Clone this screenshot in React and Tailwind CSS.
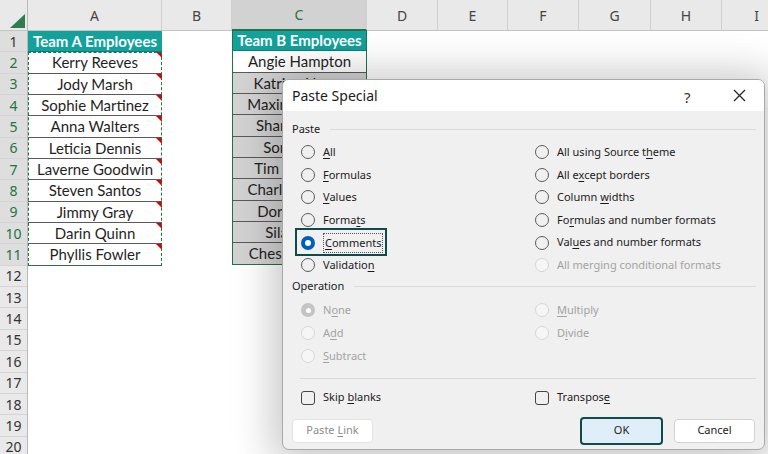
import React from 'react';

const teamA = [
  'Kerry Reeves', 'Jody Marsh', 'Sophie Martinez', 'Anna Walters', 'Leticia Dennis',
  'Laverne Goodwin', 'Steven Santos', 'Jimmy Gray', 'Darin Quinn', 'Phyllis Fowler',
];
const teamB = [
  'Angie Hampton', 'Katrina Hayes', 'Maxine Sanders', 'Shane Tucker', 'Sonya Diaz',
  'Tim Holloway', 'Charles Morgan', 'Doris Palmer', 'Silas Ward', 'Chester Howell',
];

const rows = Array.from({ length: 20 }, (_, i) => i + 1);

// access key underline
function Key({ text, k = -1 }) {
  if (k < 0) return <span>{text}</span>;
  return (
    <span>
      {text.slice(0, k)}
      <span className="underline underline-offset-2">{text[k]}</span>
      {text.slice(k + 1)}
    </span>
  );
}

function Radio({ checked, disabled }) {
  if (checked && disabled) {
    return (
      <span className="w-[14px] h-[14px] rounded-full bg-[#c4c4c4] flex items-center justify-center shrink-0">
        <span className="w-[5px] h-[5px] rounded-full bg-white" />
      </span>
    );
  }
  if (checked) {
    return (
      <span className="w-[14px] h-[14px] rounded-full bg-[#005fb8] flex items-center justify-center shrink-0">
        <span className="w-[6px] h-[6px] rounded-full bg-white" />
      </span>
    );
  }
  return (
    <span
      className={
        disabled
          ? 'w-[14px] h-[14px] rounded-full border border-[#d6d6d6] bg-[#f6f6f6] shrink-0'
          : 'w-[14px] h-[14px] rounded-full border border-[#5c5c5c] shrink-0'
      }
    />
  );
}

function Option({ text, k, checked, disabled, focused, tall }) {
  return (
    <div className={(tall ? 'h-[23px]' : 'h-[22.6px]') + ' flex items-center gap-[8px] relative'}>
      <Radio checked={checked} disabled={disabled} />
      {focused ? (
        <span className="border border-dotted border-[#555] px-[1px] leading-[18px] text-[#1b1b1b]">
          <Key text={text} k={k} />
        </span>
      ) : (
        <span className={disabled ? 'text-[#a3a3a3]' : 'text-[#1b1b1b]'}>
          <Key text={text} k={k} />
        </span>
      )}
      {focused && (
        <span className="absolute left-[-6px] top-[-3px] w-[92px] h-[28px] border-2 border-[#0e4b4b] pointer-events-none" />
      )}
    </div>
  );
}

function GroupHeader({ label, className }) {
  return (
    <div className={'h-[18px] flex items-center ' + className}>
      <span className="text-[#1b1b1b]">{label}</span>
      <span className="flex-1 h-px bg-[#dadada] ml-[10px]" />
    </div>
  );
}

function Checkbox({ text, k }) {
  return (
    <div className="h-[22px] flex items-center gap-[8px]">
      <span className="w-[14px] h-[14px] rounded-[3px] border border-[#444] shrink-0" />
      <span className="text-[#1b1b1b]">
        <Key text={text} k={k} />
      </span>
    </div>
  );
}

function CommentMark() {
  return (
    <span className="absolute top-0 right-0 w-0 h-0 border-t-[6px] border-l-[6px] border-t-[#e00000] border-l-transparent" />
  );
}

function ColHead({ label, w, active }) {
  return (
    <div
      className={
        w +
        ' h-[31px] flex items-center justify-center border-r border-[#cfcfcf] ' +
        (active
          ? 'bg-[#d2d2d2] text-[#217346] border-b-2 border-b-[#217346]'
          : 'bg-[#e9e9e9] text-[#444] border-b border-b-[#c4c4c4]')
      }
    >
      {label}
    </div>
  );
}

function PasteDialog() {
  return (
    <div className="absolute left-[282px] top-[79px] w-[483px] h-[371px] rounded-[7px] border border-[#a9a9a9] bg-[#f0f0f0] overflow-hidden shadow-[0_4px_40px_10px_rgba(0,0,0,0.22)] font-['Noto_Sans',sans-serif] text-[11px]">
      <div className="h-[31px] bg-white flex items-center pl-[9px] relative">
        <span className="text-[14px] text-[#1b1b1b]">Paste Special</span>
        <span className="absolute left-[401px] top-[6px] text-[15px] text-[#333]">?</span>
        <svg className="absolute left-[450px] top-[9px]" width="13" height="13" viewBox="0 0 13 13">
          <path d="M1 1 L12 12 M12 1 L1 12" stroke="#222" strokeWidth="1.2" />
        </svg>
      </div>
      <div className="pl-[9px] pr-[8px]">
        <GroupHeader label="Paste" className="mt-[9px]" />
        <div className="pl-[9px] mt-[3px] grid grid-cols-[234px_1fr]">
          <div>
            <Option text="All" k={0} />
            <Option text="Formulas" k={0} />
            <Option text="Values" k={0} />
            <Option text="Formats" k={5} />
            <Option text="Comments" k={0} checked focused />
            <Option text="Validation" k={9} />
          </div>
          <div>
            <Option text="All using Source theme" k={18} />
            <Option text="All except borders" k={5} />
            <Option text="Column widths" k={7} />
            <Option text="Formulas and number formats" k={2} />
            <Option text="Values and number formats" k={3} />
            <Option text="All merging conditional formats" disabled />
          </div>
        </div>
        <GroupHeader label="Operation" className="mt-[1px]" />
        <div className="pl-[9px] mt-[3px] grid grid-cols-[234px_1fr]">
          <div>
            <Option text="None" k={1} checked disabled tall />
            <Option text="Add" k={1} disabled tall />
            <Option text="Subtract" k={0} disabled tall />
          </div>
          <div>
            <Option text="Multiply" k={0} disabled tall />
            <Option text="Divide" k={1} disabled tall />
          </div>
        </div>
        <div className="h-px bg-[#dadada] ml-[8px] mt-[10px]" />
        <div className="pl-[9px] mt-[8px] grid grid-cols-[234px_1fr]">
          <Checkbox text="Skip blanks" k={5} />
          <Checkbox text="Transpose" k={8} />
        </div>
        <div className="mt-[8px] h-[28px] flex items-center pr-[1px]">
          <button className="w-[81px] h-[24px] rounded-[4px] bg-white border border-[#e3e3e3] text-[#8d8d8d]">
            <Key text="Paste Link" k={6} />
          </button>
          <button className="ml-auto w-[83px] h-[28px] rounded-[4px] bg-[#e0eef9] border-2 border-[#0e4b4b] text-[#1b1b1b]">
            OK
          </button>
          <button className="ml-[11px] w-[81px] h-[24px] rounded-[4px] bg-white border border-[#d2d2d2] text-[#1b1b1b]">
            Cancel
          </button>
        </div>
      </div>
    </div>
  );
}

export default function App() {
  return (
    <div className="w-[768px] h-[454px] relative overflow-hidden bg-white">
      <div className="flex font-['Noto_Sans',sans-serif] text-[14px]">
        {/* row numbers */}
        <div className="w-[28px] shrink-0 border-r border-[#b9b9b9] bg-[#e9e9e9]">
          <div className="h-[31px] relative border-b border-[#c4c4c4]">
            <svg className="absolute left-[10px] top-[14px]" width="15" height="14" viewBox="0 0 15 14">
              <path d="M15 0 L15 14 L0 14 Z" fill="#2e7d4f" />
            </svg>
          </div>
          {rows.map((r) => (
            <div
              key={r}
              className={
                'h-[21.35px] flex items-center justify-center border-b border-[#d4d4d4] ' +
                (r >= 2 && r <= 11 ? 'text-[#217346] bg-[#dedede]' : r === 1 ? 'text-[#333] bg-[#dedede]' : 'text-[#333]')
              }
            >
              {r}
            </div>
          ))}
        </div>

        {/* column A */}
        <div className="w-[134px] shrink-0">
          <ColHead label="A" w="w-[134px]" />
          <div className="font-['Lato',sans-serif] text-[15px]">
            <div className="h-[21.35px] bg-[#12a19b] text-white font-bold flex items-center justify-center border-b border-[#0d7f7a]">
              Team A Employees
            </div>
            <div className="relative">
              {teamA.map((n) => (
                <div
                  key={n}
                  className="h-[21.35px] relative flex items-center justify-center text-[#1f1f1f] border-b border-[#5a5a5a]"
                >
                  {n}
                  <CommentMark />
                </div>
              ))}
              <span className="absolute inset-0 border-[1.5px] border-dashed border-[#217346] pointer-events-none" />
            </div>
          </div>
        </div>

        {/* column B */}
        <div className="w-[70px] shrink-0">
          <ColHead label="B" w="w-[70px]" />
        </div>

        {/* column C */}
        <div className="w-[135px] shrink-0">
          <ColHead label="C" w="w-[135px]" active />
          <div className="relative font-['Lato',sans-serif] text-[15px] -mt-px">
            <div className="h-[21.35px] bg-[#12a19b] text-white font-bold flex items-center justify-center border-b border-[#0d7f7a]">
              Team B Employees
            </div>
            {teamB.map((n, i) => (
              <div
                key={n}
                className={
                  'h-[21.35px] flex items-center justify-center text-[#1f1f1f] border-b border-[#5a5a5a] whitespace-nowrap overflow-hidden ' +
                  (i === 0 ? 'bg-white' : 'bg-[#d3d3d3]')
                }
              >
                {n}
              </div>
            ))}
            <span className="absolute inset-0 border-[1.5px] border-[#217346] pointer-events-none" />
          </div>
        </div>

        <div className="w-[71px] shrink-0">
          <ColHead label="D" w="w-[71px]" />
        </div>
        <div className="w-[70px] shrink-0">
          <ColHead label="E" w="w-[70px]" />
        </div>
        <div className="w-[71px] shrink-0">
          <ColHead label="F" w="w-[71px]" />
        </div>
        <div className="w-[72px] shrink-0">
          <ColHead label="G" w="w-[72px]" />
        </div>
        <div className="w-[71px] shrink-0">
          <ColHead label="H" w="w-[71px]" />
        </div>
        <div className="w-[70px] shrink-0">
          <ColHead label="I" w="w-[70px]" />
        </div>
      </div>

      <PasteDialog />
    </div>
  );
}
